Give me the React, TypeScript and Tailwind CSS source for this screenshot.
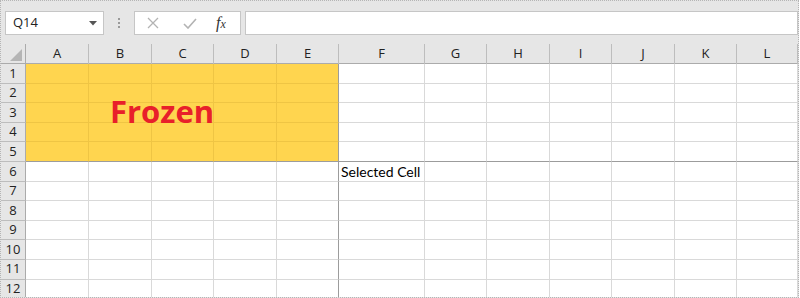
import React from "react";

const cols = ["A", "B", "C", "D", "E", "F", "G", "H", "I", "J", "K", "L"];
const rows = [1, 2, 3, 4, 5, 6, 7, 8, 9, 10, 11, 12];

const gridCols =
  "grid grid-cols-[25px_63px_63px_62px_63px_62px_86px_62px_63px_62px_63px_62px_1fr]";

function Cell({ r, c }: { r: number; c: number }) {
  const frozen = r <= 5 && c <= 4;
  const rowLine = r === 5 ? "border-b-[#9c9c9c]" : frozen ? "border-b-[#efc544]" : "border-b-[#d9d9d9]";
  const colLine = c === 4 ? "border-r-[#9c9c9c]" : frozen ? "border-r-[#efc544]" : "border-r-[#d9d9d9]";
  return (
    <div
      className={`h-[19.6px] border-b border-r ${rowLine} ${colLine} ${
        frozen ? "bg-[#ffd54f]" : "bg-white"
      } relative overflow-visible`}
    >
      {r === 6 && c === 5 && (
        <span className="absolute left-[2px] top-[1px] whitespace-nowrap text-[14px] leading-[18px] text-black">
          Selected Cell
        </span>
      )}
    </div>
  );
}

export default function App() {
  return (
    <div
      className="relative w-[799px] h-[298px] overflow-hidden border border-dotted border-[#b5b5b5] bg-[#e6e6e6]"
      style={{ fontFamily: "Lato, 'Open Sans', sans-serif" }}
    >
      {/* toolbar */}
      <div className="flex h-[43px] items-center pl-[4px] pt-[1px]">
        <div className="flex h-[24px] w-[99px] items-center justify-between border border-[#c6c6c6] bg-white pl-[7px] pr-[6px]">
          <span className="text-[13px] text-[#222]" style={{ fontFamily: "'Open Sans', sans-serif" }}>
            Q14
          </span>
          <svg width="8" height="5" viewBox="0 0 8 5">
            <path d="M0 0h8L4 4.5z" fill="#555" />
          </svg>
        </div>
        <div className="flex w-[30px] flex-col items-center gap-[2px]">
          <span className="h-[2px] w-[2px] bg-[#9a9a9a]" />
          <span className="h-[2px] w-[2px] bg-[#9a9a9a]" />
          <span className="h-[2px] w-[2px] bg-[#9a9a9a]" />
        </div>
        <div className="flex h-[24px] w-[107px] items-center border border-[#c6c6c6] bg-white">
          <svg className="ml-[12px]" width="12" height="12" viewBox="0 0 12 12">
            <path d="M1 1l10 10M11 1L1 11" stroke="#b3b3b3" strokeWidth="1.3" />
          </svg>
          <svg className="ml-[24px]" width="14" height="11" viewBox="0 0 14 11">
            <path d="M1 6l4 4L13 1" stroke="#b3b3b3" strokeWidth="1.6" fill="none" />
          </svg>
          <span
            className="ml-[19px] text-[16px] italic leading-none text-[#333]"
            style={{ fontFamily: "'Liberation Serif', serif" }}
          >
            f<span className="text-[12px]">x</span>
          </span>
        </div>
        <div className="ml-[4px] h-[24px] flex-1 border border-[#c6c6c6] bg-white" />
      </div>

      {/* header row */}
      <div className={`${gridCols} h-[20px] border-b border-[#ababab] bg-[#e6e6e6]`}>
        <div className="relative border-r border-[#ababab]">
          <svg className="absolute bottom-[3px] right-[3px]" width="12" height="12" viewBox="0 0 12 12">
            <path d="M12 0V12H0z" fill="#b5b5b5" />
          </svg>
        </div>
        {cols.map((c) => (
          <div
            key={c}
            className="flex items-center justify-center border-r border-[#bdbdbd] text-[13px] text-[#222]"
            style={{ fontFamily: "'Open Sans', sans-serif" }}
          >
            {c}
          </div>
        ))}
      </div>

      {/* rows */}
      {rows.map((r) => (
        <div key={r} className={gridCols}>
          <div
            className="flex h-[19.6px] items-center justify-center border-b border-r border-b-[#bdbdbd] border-r-[#ababab] bg-[#e6e6e6] text-[13px] text-[#222]"
            style={{ fontFamily: "'Open Sans', sans-serif" }}
          >
            {r}
          </div>
          {cols.map((c, i) => (
            <Cell key={c} r={r} c={i} />
          ))}
        </div>
      ))}

      <span
        className="absolute left-[109px] top-[95px] whitespace-nowrap text-[31px] font-bold leading-[30px] text-[#e8202a]"
        style={{ fontFamily: "'Open Sans', sans-serif" }}
      >
        Frozen
      </span>
    </div>
  );
}
